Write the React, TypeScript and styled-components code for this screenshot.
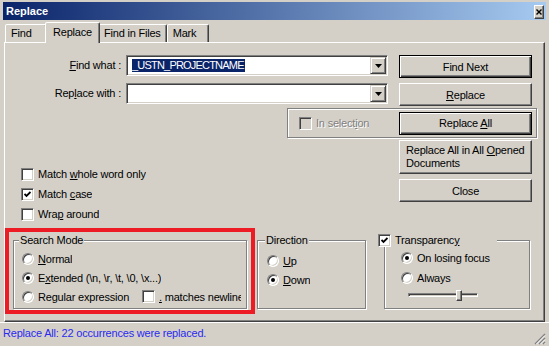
import React from "react";
import styled, { createGlobalStyle, css } from "styled-components";

const GlobalStyle = createGlobalStyle`
  html, body {
    margin: 0;
    padding: 0;
    background: #d4d0c8;
  }
  body {
    font-family: "Liberation Sans", Arial, sans-serif;
    font-size: 11px;
    letter-spacing: -0.2px;
    color: #000;
  }
  * {
    box-sizing: border-box;
  }
`;

const Window = styled.div`
  width: 549px;
  height: 346px;
  background: #d4d0c8;
  display: flex;
  flex-direction: column;
  overflow: hidden;
`;

const TitleBar = styled.div`
  margin: 2px 3px 0;
  height: 18px;
  display: flex;
  align-items: center;
  padding: 0 2px 0 3px;
  background: linear-gradient(to right, #0a246a, #a6caf0);
`;

const TitleText = styled.span`
  color: #fff;
  font-weight: bold;
  letter-spacing: 0;
`;

const CloseButton = styled.div`
  margin-left: auto;
  align-self: flex-end;
  margin-bottom: 1px;
  width: 10px;
  height: 14px;
  display: flex;
  align-items: center;
  justify-content: center;
  background: #d4d0c8;
  border: 1px solid;
  border-color: #fff #404040 #404040 #fff;
  box-shadow: inset -1px -1px 0 #808080;
`;

const TabStrip = styled.div`
  height: 22px;
  display: flex;
  align-items: flex-end;
  padding-left: 5px;
`;

const Tab = styled.div<{ $active?: boolean }>`
  height: 18px;
  min-width: 42px;
  padding: 0 5px;
  line-height: 16px;
  background: #d4d0c8;
  border: 1px solid;
  border-bottom: none;
  border-color: #fff #404040 transparent #fff;
  border-radius: 2px 2px 0 0;
  box-shadow: inset -1px 0 0 #808080;
  white-space: nowrap;

  ${(p) =>
    p.$active &&
    css`
      height: 21px;
      margin: 0 -2px -1px;
      padding: 0 7px;
      line-height: 18px;
      position: relative;
      z-index: 1;
    `}
`;

const Panel = styled.div`
  margin-left: 4px;
  width: 541px;
  height: 280px;
  padding-top: 12px;
  border: 1px solid;
  border-color: #fff #404040 #404040 #fff;
  box-shadow: inset -1px -1px 0 #808080;
`;

const FieldRow = styled.div`
  display: flex;
  height: 23px;

  & + & {
    margin-top: 5px;
  }
`;

const FieldLabel = styled.label`
  width: 116px;
  text-align: right;
  line-height: 21px;
  white-space: nowrap;
`;

const Mn = styled.span`
  text-decoration: underline;
  text-underline-offset: 1px;
`;

const Caption = styled.span`
  white-space: pre;
`;

const Combo = styled.div`
  margin-left: 5px;
  width: 262px;
  height: 21px;
  display: flex;
  align-items: center;
  padding-left: 5px;
  background: #fff;
  border: 1px solid;
  border-color: #808080 #fff #fff #808080;
  box-shadow: inset 1px 1px 0 #404040, inset -1px -1px 0 #d4d0c8;
`;

const Selected = styled.span`
  line-height: 13px;
  padding-right: 1px;
  background: #0a246a;
  color: #fff;
  letter-spacing: -0.8px;
`;

const DropButton = styled.div`
  margin-left: auto;
  margin-right: 1px;
  width: 16px;
  height: 17px;
  display: flex;
  align-items: center;
  justify-content: center;
  background: #d4d0c8;
  border: 1px solid;
  border-color: #d4d0c8 #404040 #404040 #d4d0c8;
  box-shadow: inset 1px 1px 0 #fff, inset -1px -1px 0 #808080;
`;

const Button = styled.button<{ $default?: boolean; $tall?: boolean }>`
  width: 133px;
  height: 23px;
  padding: 0;
  font: inherit;
  letter-spacing: inherit;
  color: #000;
  background: #d4d0c8;
  border: 1px solid;
  border-color: #fff #404040 #404040 #fff;
  box-shadow: inset -1px -1px 0 #808080;

  ${(p) =>
    p.$default &&
    css`
      border-color: #000;
      box-shadow: inset 1px 1px 0 #fff, inset -1px -1px 0 #404040,
        inset -2px -2px 0 #808080;
    `}

  ${(p) =>
    p.$tall &&
    css`
      height: 34px;
      text-align: left;
      padding-left: 6px;
      line-height: 13px;
    `}
`;

const RowButton = styled(Button)`
  margin-left: 11px;
`;

const LowerArea = styled.div`
  display: flex;
  margin-top: 2px;
`;

const OptionsColumn = styled.div`
  flex: 1;
  padding: 56px 0 0 16px;
`;

const ActionsColumn = styled.div`
  width: 250px;
  margin-right: 7px;
  display: flex;
  flex-direction: column;
  align-items: flex-end;
`;

const SelectionBox = styled.div`
  align-self: stretch;
  height: 30px;
  display: flex;
  align-items: center;
  padding: 0 4px 0 11px;
  border: 1px solid #808080;
  box-shadow: inset 1px 1px 0 #fff, 1px 1px 0 #fff;
`;

const SideButton = styled(Button)<{ $gap: number }>`
  margin-top: ${(p) => p.$gap}px;
  margin-right: 5px;
`;

const BoxButton = styled(Button)`
  margin-left: auto;
`;

const OptionRow = styled.div<{ $h: number }>`
  display: flex;
  align-items: center;
  height: ${(p) => p.$h}px;
  white-space: nowrap;
`;

const OptionItem = styled.label<{ $width?: number; $disabled?: boolean }>`
  display: flex;
  align-items: center;
  white-space: nowrap;
  overflow: hidden;
  ${(p) => p.$width && `width: ${p.$width}px; flex: none;`}
  ${(p) =>
    p.$disabled &&
    css`
      color: #808080;
      text-shadow: 1px 1px 0 #fff;
    `}
`;

const CheckBox = styled.span<{ $disabled?: boolean }>`
  flex: none;
  width: 13px;
  height: 13px;
  margin-right: 4px;
  display: flex;
  align-items: center;
  justify-content: center;
  background: ${(p) => (p.$disabled ? "#d4d0c8" : "#fff")};
  border: 1px solid;
  border-color: #808080 #fff #fff #808080;
  box-shadow: inset 1px 1px 0 #404040, inset -1px -1px 0 #d4d0c8;
`;

const Radio = styled.span`
  flex: none;
  width: 12px;
  height: 12px;
  margin-right: 4px;
  display: flex;
  align-items: center;
  justify-content: center;
  border-radius: 50%;
  background: #fff;
  border: 1px solid;
  border-color: #808080 #fff #fff #808080;
  box-shadow: inset 1px 1px 0 #404040, inset -1px -1px 0 #d4d0c8;
`;

const Dot = styled.span`
  width: 4px;
  height: 4px;
  border-radius: 50%;
  background: #000;
`;

const BottomRow = styled.div`
  display: flex;
  align-items: flex-start;
  margin-top: 4px;
`;

const Highlight = styled.div`
  width: 250px;
  height: 86px;
  padding: 1px 4px;
  border: 4px solid #ed1c24;
`;

const Group = styled.fieldset<{ $width: number; $left?: number; $top?: number }>`
  margin: ${(p) => p.$top ?? 0}px 0 0 ${(p) => p.$left ?? 0}px;
  padding: 0;
  min-width: 0;
  width: ${(p) => p.$width}px;
  height: 76px;
  border: 1px solid #808080;
  box-shadow: inset 1px 1px 0 #fff, 1px 1px 0 #fff;
`;

const Legend = styled.legend<{ $offset: number; $width?: number }>`
  margin-left: ${(p) => p.$offset}px;
  padding: 0 1px;
  height: 14px;
  line-height: 14px;
  background: #d4d0c8;
  ${(p) => p.$width && `width: ${p.$width}px; padding: 0;`}
`;

const LegendCheck = styled.span`
  display: flex;
  align-items: center;
  height: 14px;
`;

const GroupBody = styled.div<{ $left: number; $top: number }>`
  padding: ${(p) => p.$top}px 0 0 ${(p) => p.$left}px;
`;

const SliderRow = styled.div`
  height: 14px;
  display: flex;
  align-items: center;
  padding-left: 7px;
`;

const Track = styled.div`
  position: relative;
  width: 70px;
  height: 4px;
  border: 1px solid;
  border-color: #808080 #fff #fff #808080;
  box-shadow: inset 1px 1px 0 #404040;
`;

const Thumb = styled.span`
  position: absolute;
  top: -4px;
  width: 6px;
  height: 11px;
  background: #d4d0c8;
  border: 1px solid;
  border-color: #fff #404040 #404040 #fff;
  box-shadow: inset -1px -1px 0 #808080;
`;

const StatusBar = styled.div`
  flex: 1;
  display: flex;
  padding: 4px 0 0 3px;
  line-height: 13px;
  color: #2a2aef;
  border-top: 1px solid #fff;
`;

const Grip = styled.svg`
  align-self: flex-end;
  margin: 0 3px 1px auto;
`;

const Check = () => (
  <svg width="7" height="7" viewBox="0 0 7 7">
    <polyline points="0.5,3 2.5,5 6.5,1" fill="none" stroke="#000" strokeWidth="1.8" />
  </svg>
);

const Arrow = () => (
  <svg width="7" height="4" viewBox="0 0 7 4">
    <polygon points="0,0 7,0 3.5,4" fill="#000" />
  </svg>
);

const Slider = ({ value }: { value: number }) => (
  <SliderRow>
    <Track>
      <Thumb style={{ left: `${(value / 100) * 64 - 1}px` }} />
    </Track>
  </SliderRow>
);

export default function App() {
  return (
    <>
      <GlobalStyle />
      <Window>
        <TitleBar>
          <TitleText>Replace</TitleText>
          <CloseButton>
            <svg width="6" height="6" viewBox="0 0 6 6">
              <path d="M0.5 0.5 L5.5 5.5 M5.5 0.5 L0.5 5.5" stroke="#000" strokeWidth="1.4" />
            </svg>
          </CloseButton>
        </TitleBar>

        <TabStrip>
          <Tab>Find</Tab>
          <Tab $active>Replace</Tab>
          <Tab>Find in Files</Tab>
          <Tab>Mark</Tab>
        </TabStrip>

        <Panel>
          <FieldRow>
            <FieldLabel>
              <Mn>F</Mn>ind what :
            </FieldLabel>
            <Combo>
              <Selected>_USTN_PROJECTNAME</Selected>
              <DropButton>
                <Arrow />
              </DropButton>
            </Combo>
            <RowButton $default>Find Next</RowButton>
          </FieldRow>
          <FieldRow>
            <FieldLabel>
              Rep<Mn>l</Mn>ace with :
            </FieldLabel>
            <Combo>
              <DropButton>
                <Arrow />
              </DropButton>
            </Combo>
            <RowButton>
              <Mn>R</Mn>eplace
            </RowButton>
          </FieldRow>

          <LowerArea>
            <OptionsColumn>
              <OptionRow $h={20}>
                <OptionItem>
                  <CheckBox />
                  <Caption>
                    Match <Mn>w</Mn>hole word only
                  </Caption>
                </OptionItem>
              </OptionRow>
              <OptionRow $h={20}>
                <OptionItem>
                  <CheckBox>
                    <Check />
                  </CheckBox>
                  <Caption>
                    Match <Mn>c</Mn>ase
                  </Caption>
                </OptionItem>
              </OptionRow>
              <OptionRow $h={20}>
                <OptionItem>
                  <CheckBox />
                  <Caption>
                    Wra<Mn>p</Mn> around
                  </Caption>
                </OptionItem>
              </OptionRow>
            </OptionsColumn>

            <ActionsColumn>
              <SelectionBox>
                <OptionItem $disabled>
                  <CheckBox $disabled />
                  <Caption>
                    In select<Mn>i</Mn>on
                  </Caption>
                </OptionItem>
                <BoxButton $default>
                  Replace <Mn>A</Mn>ll
                </BoxButton>
              </SelectionBox>
              <SideButton $gap={2} $tall>
                Replace All in All <Mn>O</Mn>pened
                <br />
                Documents
              </SideButton>
              <SideButton $gap={5}>Close</SideButton>
            </ActionsColumn>
          </LowerArea>

          <BottomRow>
            <Highlight>
              <Group $width={234}>
                <Legend $offset={5}>Search Mode</Legend>
                <GroupBody $left={8} $top={2}>
                  <OptionRow $h={19}>
                    <OptionItem>
                      <Radio />
                      <Caption>
                        <Mn>N</Mn>ormal
                      </Caption>
                    </OptionItem>
                  </OptionRow>
                  <OptionRow $h={19}>
                    <OptionItem>
                      <Radio>
                        <Dot />
                      </Radio>
                      <Caption>
                        E<Mn>x</Mn>tended (\n, \r, \t, \0, \x...)
                      </Caption>
                    </OptionItem>
                  </OptionRow>
                  <OptionRow $h={19}>
                    <OptionItem $width={120}>
                      <Radio />
                      <Caption>
                        Re<Mn>g</Mn>ular expression
                      </Caption>
                    </OptionItem>
                    <OptionItem $width={99}>
                      <CheckBox />
                      <Caption>
                        <Mn>.</Mn> matches newline
                      </Caption>
                    </OptionItem>
                  </OptionRow>
                </GroupBody>
              </Group>
            </Highlight>

            <Group $width={109} $left={2} $top={5}>
              <Legend $offset={7}>Direction</Legend>
              <GroupBody $left={9} $top={4}>
                <OptionRow $h={19}>
                  <OptionItem>
                    <Radio />
                    <Caption>
                      <Mn>U</Mn>p
                    </Caption>
                  </OptionItem>
                </OptionRow>
                <OptionRow $h={19}>
                  <OptionItem>
                    <Radio>
                      <Dot />
                    </Radio>
                    <Caption>
                      <Mn>D</Mn>own
                    </Caption>
                  </OptionItem>
                </OptionRow>
              </GroupBody>
            </Group>

            <Group $width={146} $left={18} $top={5}>
              <Legend $offset={-7} $width={119}>
                <LegendCheck>
                  <CheckBox>
                    <Check />
                  </CheckBox>
                  <Caption>
                    Transparenc<Mn>y</Mn>
                  </Caption>
                </LegendCheck>
              </Legend>
              <GroupBody $left={16} $top={1}>
                <OptionRow $h={20}>
                  <OptionItem>
                    <Radio>
                      <Dot />
                    </Radio>
                    <Caption>On losing focus</Caption>
                  </OptionItem>
                </OptionRow>
                <OptionRow $h={20}>
                  <OptionItem>
                    <Radio />
                    <Caption>Always</Caption>
                  </OptionItem>
                </OptionRow>
                <Slider value={75} />
              </GroupBody>
            </Group>
          </BottomRow>
        </Panel>

        <StatusBar>
          Replace All: 22 occurrences were replaced.
          <Grip width="12" height="12" viewBox="0 0 12 12">
            <path d="M11 1 L1 11 M11 5 L5 11 M11 9 L9 11" stroke="#808080" strokeWidth="1.4" />
            <path d="M11 2.5 L2.5 11 M11 6.5 L6.5 11 M11 10.5 L10.5 11" stroke="#fff" strokeWidth="1" />
          </Grip>
        </StatusBar>
      </Window>
    </>
  );
}
